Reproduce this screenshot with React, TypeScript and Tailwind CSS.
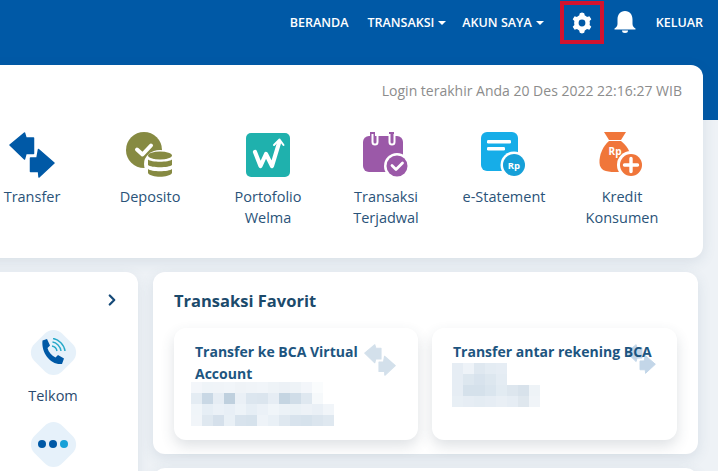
import { ChevronRight } from "lucide-react";

const FONT = "font-['Open_Sans',_'Liberation_Sans',_sans-serif]";

function TransferIcon({ color = "#0059a6", size = 46 }: { color?: string; size?: number }) {
  return (
    <svg width={size} height={size} viewBox="0 0 46 46" fill={color} stroke={color} strokeWidth="1.5" strokeLinejoin="round">
      <path d="M1 13 L15.5 1 L17 6 L24.5 6 L24.5 21.5 L17 21.5 L15.5 27 Z" />
      <path d="M45 31 L30 45 L29.5 39.5 L21.5 39.5 L21.5 26 L28 26 L29.5 17.5 Z" />
    </svg>
  );
}

function DepositoIcon() {
  return (
    <svg width="48" height="46" viewBox="0 0 48 46">
      <circle cx="18" cy="18" r="18" fill="#868a42" />
      <path d="M11 17.5 L16.5 22.5 L25 13.5" fill="none" stroke="#fff" strokeWidth="4" strokeLinecap="round" strokeLinejoin="round" />
      <ellipse cx="34" cy="32" rx="16" ry="14" fill="#fff" />
      <ellipse cx="34" cy="23.5" rx="12" ry="4" fill="#868a42" />
      <path d="M22 27.5 C25 30.5 43 30.5 46 27.5 L46 33 C43 36 25 36 22 33 Z" fill="#868a42" />
      <path d="M22 37 C25 40 43 40 46 37 L46 41 C43 46 25 46 22 41 Z" fill="#868a42" />
    </svg>
  );
}

function WelmaIcon() {
  return (
    <svg width="44" height="44" viewBox="0 0 44 44">
      <rect width="44" height="44" rx="5" fill="#1fb1ad" />
      <path d="M9 19 L14.5 33 L20 21 L26 33 L33 10" fill="none" stroke="#fff" strokeWidth="4.2" strokeLinejoin="round" strokeLinecap="round" />
      <path d="M28 12 L33.5 6.5 L37.5 12" fill="none" stroke="#fff" strokeWidth="2" strokeLinecap="round" strokeLinejoin="round" />
    </svg>
  );
}

function JadwalIcon() {
  return (
    <svg width="46" height="46" viewBox="0 0 46 46">
      <path d="M6 4 H34 A6 6 0 0 1 40 10 V40 H6 A6 6 0 0 1 0 34 V10 A6 6 0 0 1 6 4 Z" fill="#9b59a8" />
      <path d="M7 0 H12 V4 H7 Z M26 0 H31 V4 H26 Z" fill="#9b59a8" />
      <path d="M9.5 2 V10 A2.5 2.5 0 0 0 14.5 10 V2" fill="none" stroke="#fff" strokeWidth="2" />
      <path d="M26.5 2 V10 A2.5 2.5 0 0 0 31.5 10 V2" fill="none" stroke="#fff" strokeWidth="2" />
      <circle cx="34" cy="34" r="13" fill="#fff" />
      <circle cx="34" cy="34" r="10.5" fill="#9b59a8" />
      <path d="M29 33.5 L33 37.5 L39.5 31" fill="none" stroke="#fff" strokeWidth="2.8" strokeLinecap="round" strokeLinejoin="round" />
    </svg>
  );
}

function StatementIcon() {
  return (
    <svg width="46" height="46" viewBox="0 0 46 46">
      <rect width="37" height="39" rx="6" fill="#16ade8" />
      <rect x="6" y="8" width="24" height="3.5" rx="1.2" fill="#fff" />
      <rect x="6" y="15" width="18" height="3.5" rx="1.2" fill="#fff" />
      <circle cx="33" cy="33" r="13.5" fill="#fff" />
      <circle cx="33" cy="33" r="11" fill="#16a0d8" />
      <text x="33" y="36.5" textAnchor="middle" fontSize="9.5" fontWeight="700" fill="#fff" fontFamily="Open Sans">Rp</text>
    </svg>
  );
}

function KreditIcon() {
  return (
    <svg width="46" height="46" viewBox="0 0 46 46">
      <path d="M5 0 H27 L22 8 H10 Z" fill="#f0763a" />
      <path d="M10 9 H22 C30 15 33 24 32 31 C31 38 26 40 16 40 C6 40 1 38 0.5 31 C0 23 4 14 10 9 Z" fill="#f0763a" />
      <text x="16" y="23" textAnchor="middle" fontSize="10" fontWeight="700" fill="#fff" fontFamily="Open Sans">Rp</text>
      <circle cx="32" cy="33" r="14" fill="#fff" />
      <circle cx="32" cy="33" r="11" fill="#f0763a" />
      <path d="M32 26.5 V39.5 M25.5 33 H38.5" stroke="#fff" strokeWidth="3.4" strokeLinecap="round" />
    </svg>
  );
}

function PhoneIcon() {
  return (
    <svg width="26" height="28" viewBox="0 0 26 28" fill="none">
      <path d="M2.5 2.5 L7 1 L10 7.5 L7.5 10 C8.5 14 11.5 17.5 15.5 19.5 L18 17 L24 20.5 L22 26 C11 27.5 1 15 2.5 2.5 Z" fill="#0059a6" />
      <path d="M12 8 C14.5 8.5 16.5 10.5 17 13" stroke="#27a9c9" strokeWidth="1.4" />
      <path d="M12.5 4 C16.5 4.5 20.5 8.5 21 13" stroke="#27a9c9" strokeWidth="1.4" />
      <path d="M13 0.5 C18.5 1 24.5 7 25 13" stroke="#27a9c9" strokeWidth="1.4" />
    </svg>
  );
}

function Squircle({ children }: { children: React.ReactNode }) {
  return (
    <div className="relative flex h-[46px] w-[46px] shrink-0 items-center justify-center">
      <div className="absolute left-[3.5px] top-[3.5px] h-[39px] w-[39px] rotate-45 rounded-[12px] bg-[#e6f1fa]" />
      <div className="relative flex items-center justify-center gap-[3px]">{children}</div>
    </div>
  );
}

const NAV_CARET = "ml-1 inline-block h-0 w-0 border-x-[4px] border-t-[4px] border-x-transparent border-t-white";

const MENU = [
  { icon: <TransferIcon />, label: ["Transfer"] },
  { icon: <DepositoIcon />, label: ["Deposito"] },
  { icon: <WelmaIcon />, label: ["Portofolio", "Welma"] },
  { icon: <JadwalIcon />, label: ["Transaksi", "Terjadwal"] },
  { icon: <StatementIcon />, label: ["e-Statement"] },
  { icon: <KreditIcon />, label: ["Kredit", "Konsumen"] },
];

// censored values in the picture: rows of mosaic tiles
const MOSAIC_A = [
  ["#f3f6fa", "#eff4f8", "#f0f4f8", "#f1f5f9", "#eff3f7", "#f0f4f8", "#f1f5f9", "#eef3f7", "#ecf1f6", "#eef3f7", "#f3f6fa", "#fafcfd", "#ffffff"],
  ["#e4ecf3", "#c9d8e5", "#e6edf4", "#bfd0de", "#eaf0f6", "#dce6ef", "#dbe5ee", "#e6edf4", "#c5d5e2", "#d0dde8", "#dfe8f0", "#f6f9fb", "#ffffff"],
  ["#f0f5f9", "#e6eef5", "#ebf1f7", "#e8eff6", "#edf3f8", "#e6eef5", "#ebf1f7", "#f0f5f9", "#ecf2f7", "#eaf1f6", "#edf2f7", "#eaf0f6", "#f1f5f9"],
  ["#f1f5f9", "#dfe8f0", "#d5e0eb", "#e9f0f6", "#d8e3ed", "#d6e2ec", "#eef3f8", "#e9f0f6", "#dfe8f0", "#d8e3ed", "#d6e2ec", "#dbe5ee", "#dfe8f0"],
];
const MOSAIC_B = [
  ["#e6edf4", "#eef3f8", "#dfe8f0", "#e4ecf3", "#e6edf4", "#ffffff", "#ffffff", "#ffffff"],
  ["#e6edf4", "#dde7ef", "#d8e3ed", "#dde7ef", "#e4ecf3", "#ffffff", "#ffffff", "#ffffff"],
  ["#e6edf4", "#d5e1eb", "#d5e1eb", "#dae5ee", "#e2ebf2", "#dde6ee", "#d8e2eb", "#eef3f7"],
  ["#e8eff5", "#e6edf4", "#e4ecf3", "#e6edf4", "#e9eff5", "#e6edf4", "#dfe7ee", "#f0f4f8"],
];

function Mosaic({ rows, tile }: { rows: string[][]; tile: number }) {
  return (
    <div className="blur-[0.5px]">
      {rows.map((row, i) => (
        <div key={i} className="flex">
          {row.map((c, j) => (
            <div key={j} style={{ backgroundColor: c, width: tile, height: tile }} />
          ))}
        </div>
      ))}
    </div>
  );
}

export default function App() {
  return (
    <div className={`h-[471px] w-[718px] overflow-hidden bg-[#eef2f6] ${FONT}`}>
      <div className="h-[120px] bg-[#0059a6]">
        <nav className="flex h-[65px] items-start justify-end pr-[15px] text-[12.5px] font-semibold text-white">
          <a className="mt-[15px] leading-[16px]">BERANDA</a>
          <a className="ml-[19px] mt-[15px] flex items-center leading-[16px]">TRANSAKSI<span className={NAV_CARET} /></a>
          <a className="ml-4 mt-[15px] flex items-center leading-[16px]">AKUN SAYA<span className={NAV_CARET} /></a>
          <span className="ml-4 mt-px flex h-[43px] w-[44px] items-center justify-center border-4 border-[#d2132f]">
            <svg width="20" height="22" viewBox="0 0 20 22" fill="#fff">
              <path fillRule="evenodd" d="M10 0.5 L12.2 1.2 L12.8 3.6 A7.5 7.5 0 0 1 15 4.9 L17.4 4.2 L19.3 7.2 L17.6 9 A7.5 7.5 0 0 1 17.6 13 L19.3 14.8 L17.4 17.8 L15 17.1 A7.5 7.5 0 0 1 12.8 18.4 L12.2 20.8 L10 21.5 L7.8 20.8 L7.2 18.4 A7.5 7.5 0 0 1 5 17.1 L2.6 17.8 L0.7 14.8 L2.4 13 A7.5 7.5 0 0 1 2.4 9 L0.7 7.2 L2.6 4.2 L5 4.9 A7.5 7.5 0 0 1 7.2 3.6 L7.8 1.2 Z M10 7.6 A3.4 3.4 0 1 0 10 14.4 A3.4 3.4 0 1 0 10 7.6 Z" />
            </svg>
          </span>
          <span className="ml-2.5 mt-[11px]">
            <svg width="22" height="22" viewBox="0 0 22 22" fill="#fff">
              <path d="M11 0 C16 0 18.5 4 18.5 8.5 V13 C18.5 15 20 16.5 21.5 17.5 V18.5 H0.5 V17.5 C2 16.5 3.5 15 3.5 13 V8.5 C3.5 4 6 0 11 0 Z" />
              <path d="M8 19.5 H14 A3 2.5 0 0 1 8 19.5 Z" />
            </svg>
          </span>
          <a className="ml-5 mt-[15px] leading-[16px]">KELUAR</a>
        </nav>
      </div>

      <main className="-mt-[55px] ml-[-20px] mr-[15px] flex flex-col">
        <section className="h-[193px] rounded-xl bg-white shadow-[0_4px_14px_rgba(60,90,120,0.12)]">
          <p className="pr-[21px] pt-[16px] text-right text-[14px] leading-[20px] text-[#8c8c8c]">
            Login terakhir Anda 20 Des 2022 22:16:27 WIB
          </p>
          <div className="ml-[-7px] mt-[31px] flex">
            {MENU.map((m) => (
              <div key={m.label[0]} className="flex w-[118px] flex-col items-center">
                <div className="flex h-[46px] items-center justify-center">{m.icon}</div>
                <div className="mt-[8px] text-center text-[14.5px] leading-[21px] text-[#2a5379]">
                  {m.label.map((l) => (
                    <div key={l}>{l}</div>
                  ))}
                </div>
              </div>
            ))}
          </div>
        </section>

        <div className="mt-[14px] flex items-start gap-[15px]">
          <aside className="h-[260px] w-[158px] shrink-0 rounded-xl bg-white pl-[50px] shadow-[0_4px_14px_rgba(60,90,120,0.10)]">
            <div className="flex justify-end pr-[17px] pt-[19px]">
              <ChevronRight size={18} strokeWidth={3} className="text-[#164a78]" />
            </div>
            <div className="mt-[20px] flex w-[46px] flex-col items-center">
              <Squircle>
                <PhoneIcon />
              </Squircle>
              <div className="mt-[11px] text-[14.5px] leading-[20px] text-[#2a4a6e]">Telkom</div>
              <div className="mt-[15px]">
                <Squircle>
                  <span className="h-2 w-2 rounded-full bg-[#0059a6]" />
                  <span className="h-2 w-2 rounded-full bg-[#0059a6]" />
                  <span className="h-2 w-2 rounded-full bg-[#16a0d8]" />
                </Squircle>
              </div>
            </div>
          </aside>

          <div className="mr-[5px] flex flex-1 flex-col">
            <section className="h-[182px] rounded-xl bg-white px-[21px] pt-[16px] shadow-[0_4px_14px_rgba(60,90,120,0.12)]">
              <h2 className="text-[16.5px] font-bold leading-[26px] text-[#1b4a6b]">Transaksi Favorit</h2>
              <div className="mt-[14px] flex gap-[14px]">
                <div className="relative h-[112px] w-[244px] rounded-xl bg-white pl-[21px] pr-[40px] pt-[13px] shadow-[0_6px_14px_rgba(50,70,90,0.16)]">
                  <div className="absolute right-[22px] top-[16px]">
                    <TransferIcon size={32} color="#d3e0eb" />
                  </div>
                  <p className="relative text-[14px] font-bold leading-[22px] text-[#1d5580]">Transfer ke BCA Virtual Account</p>
                  <div className="-ml-[4px] -mt-[3px]">
                    <Mosaic rows={MOSAIC_A} tile={11} />
                  </div>
                </div>
                <div className="relative h-[112px] w-[245px] rounded-xl bg-white pl-[21px] pt-[13px] shadow-[0_6px_14px_rgba(50,70,90,0.16)]">
                  <div className="absolute right-[21px] top-[16px]">
                    <TransferIcon size={30} color="#c3d6e8" />
                  </div>
                  <p className="relative text-[14px] font-bold leading-[22px] text-[#1d5580]">Transfer antar rekening BCA</p>
                  <div className="-ml-[1px]">
                    <Mosaic rows={MOSAIC_B} tile={11} />
                  </div>
                </div>
              </div>
            </section>
            <section className="mt-[14px] h-[60px] rounded-xl bg-white shadow-[0_4px_14px_rgba(60,90,120,0.12)]" />
          </div>
        </div>
      </main>
    </div>
  );
}
